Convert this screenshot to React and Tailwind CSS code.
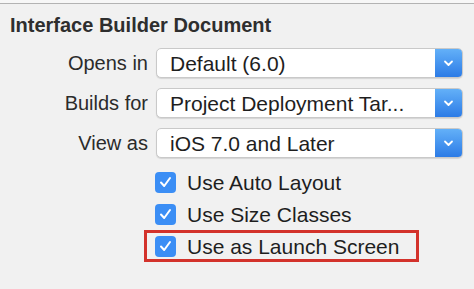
const font = { fontFamily: '"Liberation Sans", Arial, sans-serif' };

const Chevron = () => (
  <svg width="11" height="7" viewBox="0 0 11 7" fill="none">
    <path d="M2 1.5l3.5 3.5 3.5-3.5" stroke="white" strokeWidth="1.8" strokeLinecap="round" strokeLinejoin="round" />
  </svg>
);

const Check = () => (
  <svg width="13" height="12" viewBox="0 0 13 12" fill="none">
    <path d="M2 6.5l3.2 3.5L11 2" stroke="white" strokeWidth="2" strokeLinecap="round" strokeLinejoin="round" />
  </svg>
);

const Select = ({ label, value }) => (
  <div className="flex items-center">
    <div className="w-[148px] text-right text-[20px] text-[#2b2b2b] leading-none">{label}</div>
    <div className="ml-[8px] flex h-[30px] w-[307px] rounded-[5px] border border-[#c9c9c9] bg-white shadow-[0_1px_1px_rgba(0,0,0,0.12)] overflow-hidden">
      <div className="flex-1 flex items-center pl-[13px] text-[21px] text-[#1e1e1e] leading-none whitespace-nowrap">
        {value}
      </div>
      <div className="w-[27px] flex items-center justify-center bg-gradient-to-b from-[#63b0f8] to-[#2c7be6]">
        <Chevron />
      </div>
    </div>
  </div>
);

const CheckRow = ({ text, highlight }) => (
  <div
    className={
      "flex items-center h-[32px] w-[275px] pl-[8px] border-[3px] " +
      (highlight ? "border-[#d3322b]" : "border-transparent")
    }
  >
    <div className="w-[21px] h-[21px] rounded-[4px] bg-[#3b8ef5] flex items-center justify-center">
      <Check />
    </div>
    <span className="ml-[11px] text-[21px] text-[#1e1e1e] leading-none whitespace-nowrap">{text}</span>
  </div>
);

const App = () => {
  return (
    <div className="w-[474px] h-[289px] bg-[#f7f7f7] overflow-hidden" style={font}>
      <div className="mt-[3px] h-[286px] border-t border-[#b3b3b3] bg-[#f1f1f1] pl-[10px]">
        <h1 className="mt-[9px] text-[20px] font-bold leading-[24px] text-[#2e2e2e]">
          Interface Builder Document
        </h1>
        <div className="-ml-[10px] mt-[11px] flex flex-col gap-[10px]">
          <Select label="Opens in" value="Default (6.0)" />
          <Select label="Builds for" value="Project Deployment Tar..." />
          <Select label="View as" value="iOS 7.0 and Later" />
        </div>
        <div className="ml-[134px] mt-[8px] flex flex-col">
          <CheckRow text="Use Auto Layout" />
          <CheckRow text="Use Size Classes" />
          <CheckRow text="Use as Launch Screen" highlight />
        </div>
      </div>
    </div>
  );
};

export default App;
